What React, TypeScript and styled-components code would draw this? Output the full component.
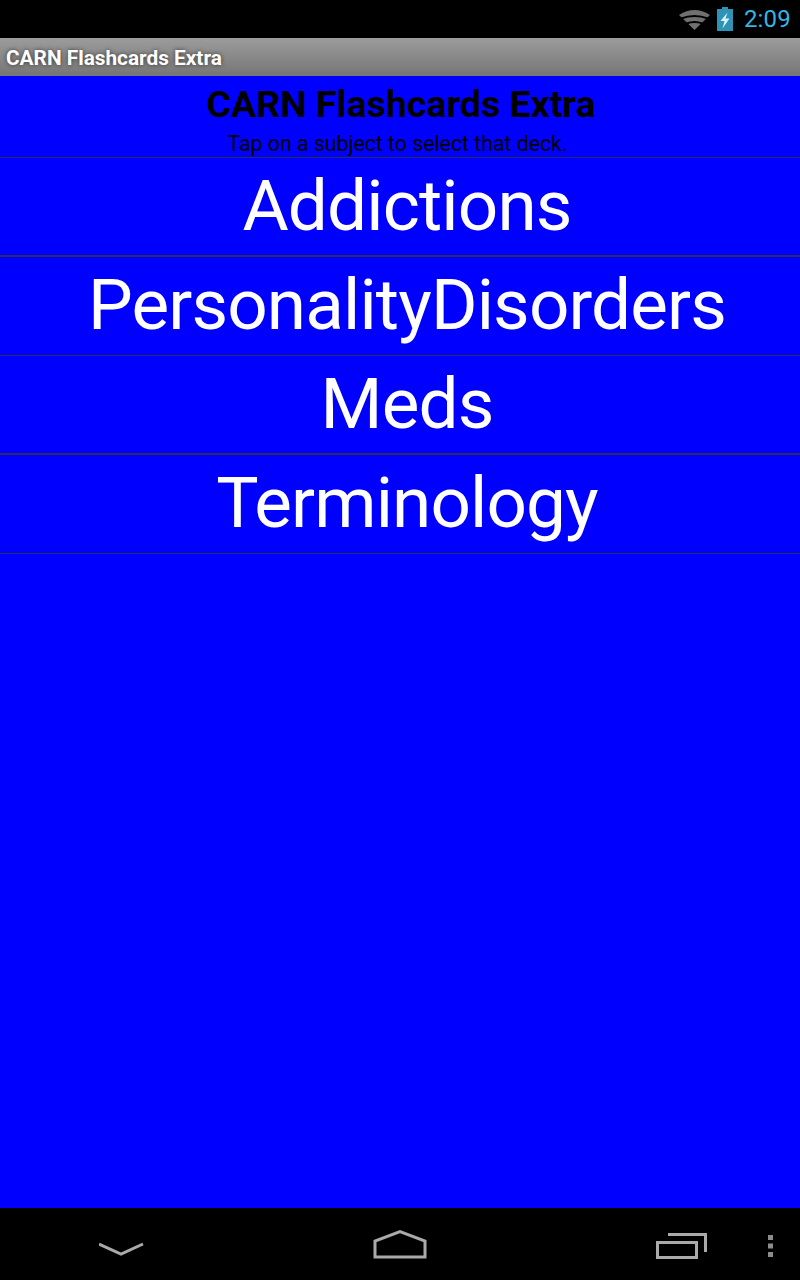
import styled, { createGlobalStyle } from "styled-components";

const GlobalStyle = createGlobalStyle`
  html, body {
    margin: 0;
    padding: 0;
    background: #0000ff;
  }
`;

const Screen = styled.div`
  width: 800px;
  height: 1280px;
  display: flex;
  flex-direction: column;
  overflow: hidden;
  font-family: Roboto, "Liberation Sans", sans-serif;
`;

const StatusBar = styled.div`
  height: 38px;
  background: #000;
  display: flex;
  align-items: center;
  justify-content: flex-end;
  padding-right: 9px;
`;

const BatteryIcon = styled.svg`
  margin-left: 7px;
`;

const Clock = styled.span`
  font-size: 24px;
  color: #33b5e5;
  margin-left: 11px;
  letter-spacing: 0.2px;
`;

const TitleBar = styled.div`
  height: 38px;
  box-sizing: border-box;
  background: linear-gradient(#9c9c9c, #757575);
  display: flex;
  align-items: center;
  padding: 2px 0 0 6px;
  font-size: 20.8px;
  font-weight: 700;
  color: #fff;
  text-shadow: 0 0 4px #333;
`;

const Content = styled.div`
  flex: 1;
  background: #0000ff;
  display: flex;
  flex-direction: column;
`;

const Heading = styled.div`
  height: 82px;
  box-sizing: border-box;
  border-bottom: 1px solid #2c2c55;
  display: flex;
  flex-direction: column;
  align-items: center;
  color: #000;
`;

const Title = styled.div`
  font-size: 37.5px;
  font-weight: 700;
  line-height: 42px;
  margin-top: 7px;
  padding-left: 2px;
`;

const Subtitle = styled.div`
  font-size: 21.25px;
  line-height: 26px;
  margin-top: 6px;
  padding-right: 5px;
`;

const Row = styled.div<{ $heavy: boolean }>`
  height: 99px;
  box-sizing: border-box;
  padding: 6px 0 0 14px;
  text-align: center;
  font-size: 71px;
  line-height: 84px;
  letter-spacing: -0.85px;
  color: #fff;
  border-bottom: ${(p) => (p.$heavy ? "2px solid #2c2c55" : "1px solid #2c2c55")};
`;

const NavBar = styled.div`
  height: 72px;
  background: #000;
  position: relative;
`;

const NavIcon = styled.svg<{ $left: number; $color?: string }>`
  position: absolute;
  left: ${(p) => p.$left}px;
  top: 0;
  fill: none;
  stroke: ${(p) => p.$color ?? "#aaa"};
`;

const subjects = ["Addictions", "PersonalityDisorders", "Meds", "Terminology"];

export default function App() {
  return (
    <Screen>
      <GlobalStyle />
      <StatusBar>
        <svg width="31" height="24" viewBox="0 0 31 24">
          <path d="M0 8 Q15.5 -2 31 8 L15.5 23 Z" fill="#707070" />
          <path d="M2 11.5 Q15.5 6.5 29 11.5" stroke="#000" strokeWidth="2" fill="none" />
          <path d="M7.5 16.5 Q15.5 13.5 23.5 16.5" stroke="#000" strokeWidth="2" fill="none" />
        </svg>
        <BatteryIcon width="16" height="24" viewBox="0 0 16 24">
          <path d="M5 0h6v2h5v22H0V2h5z" fill="#2f93b5" />
          <path d="M10.5 5.5 3.5 14h4L5.5 21.5 12.5 11.5h-4z" fill="#d8f1f9" />
        </BatteryIcon>
        <Clock>2:09</Clock>
      </StatusBar>
      <TitleBar>CARN Flashcards Extra</TitleBar>
      <Content>
        <Heading>
          <Title>CARN Flashcards Extra</Title>
          <Subtitle>Tap on a subject to select that deck.</Subtitle>
        </Heading>
        {subjects.map((subject, index) => (
          <Row key={subject} $heavy={index % 2 === 0}>
            {subject}
          </Row>
        ))}
      </Content>
      <NavBar>
        <NavIcon $left={99} width="46" height="72" viewBox="0 0 46 72" strokeWidth="3">
          <path d="M0 36 L22 46 L44 36" />
        </NavIcon>
        <NavIcon $left={372} width="56" height="72" viewBox="0 0 56 72" strokeWidth="3">
          <path d="M3 49 V33 L28 23.5 L53 33 V49 Z" />
        </NavIcon>
        <NavIcon $left={655} width="54" height="72" viewBox="0 0 54 72" strokeWidth="3">
          <path d="M2.5 34.5 H41.5 V49.5 H2.5 Z" />
          <path d="M13 26.5 H50.5 V44" />
        </NavIcon>
        <NavIcon
          $left={765}
          $color="#8c8c8c"
          width="11"
          height="72"
          viewBox="0 0 11 72"
          strokeWidth="5"
          strokeDasharray="5 3.5"
        >
          <path d="M5.5 27 V49" />
        </NavIcon>
      </NavBar>
    </Screen>
  );
}
